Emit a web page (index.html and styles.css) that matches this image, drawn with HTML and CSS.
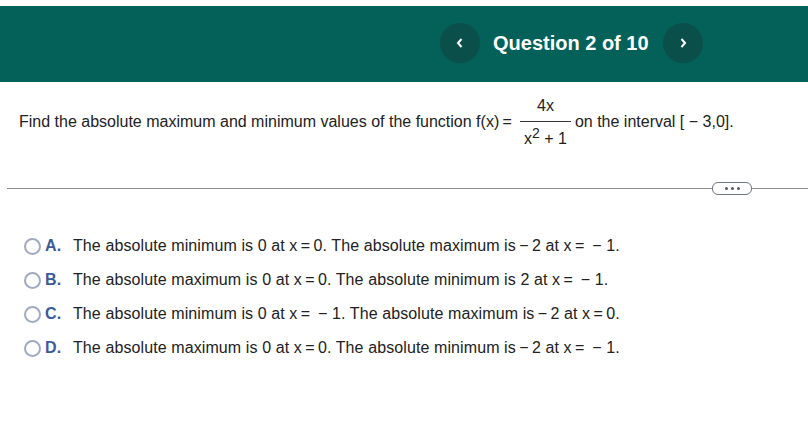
FILE: index.html
```html
<!DOCTYPE html>
<html>
<head>
<meta charset="utf-8">
<link rel="stylesheet" href="styles.css">
</head>
<body>
<div class="topgap"></div>
<header class="header">
  <div class="nav">
    <button class="navbtn" aria-label="Previous">
      <svg width="10" height="12" viewBox="0 0 10 12"><path d="M6.5 2 L3 6 L6.5 10" fill="none" stroke="#ffffff" stroke-width="2"/></svg>
    </button>
    <span class="qtitle">Question 2 of 10</span>
    <button class="navbtn" aria-label="Next">
      <svg width="10" height="12" viewBox="0 0 10 12"><path d="M3.5 2 L7 6 L3.5 10" fill="none" stroke="#ffffff" stroke-width="2"/></svg>
    </button>
  </div>
</header>
<main class="content">
  <div class="question">
    <span>Find the absolute maximum and minimum values of the function f(x)&#8201;=&#8201;</span>
    <span class="frac">
      <span class="num">4x</span>
      <span class="den">x<sup>2</sup> + 1</span>
    </span>
    <span>on the interval [ − 3,0].</span>
  </div>
  <div class="divider">
    <span class="line"></span>
    <span class="pill"><i></i><i></i><i></i></span>
    <span class="line tail"></span>
  </div>
  <ul class="options">
    <li><span class="radio"></span><span class="letter">A.</span><span class="otext">The absolute minimum is 0 at x&#8201;=&#8201;0. The absolute maximum is&#8201;−&#8201;2 at x&#8201;=&#8201; − 1.</span></li>
    <li><span class="radio"></span><span class="letter">B.</span><span class="otext">The absolute maximum is 0 at x&#8201;=&#8201;0. The absolute minimum is 2 at x&#8201;=&#8201; − 1.</span></li>
    <li><span class="radio"></span><span class="letter">C.</span><span class="otext">The absolute minimum is 0 at x&#8201;=&#8201; − 1. The absolute maximum is&#8201;−&#8201;2 at x&#8201;=&#8201;0.</span></li>
    <li><span class="radio"></span><span class="letter">D.</span><span class="otext">The absolute maximum is 0 at x&#8201;=&#8201;0. The absolute minimum is&#8201;−&#8201;2 at x&#8201;=&#8201; − 1.</span></li>
  </ul>
</main>
</body>
</html>
```
FILE: styles.css
```css
html, body {
  margin: 0;
  padding: 0;
  background: #ffffff;
  font-family: "Liberation Sans", Arial, sans-serif;
  color: #222222;
}
.topgap {
  height: 6px;
}
.header {
  height: 76px;
  background: #03615a;
  display: flex;
  align-items: center;
}
.nav {
  margin-left: 440px;
  margin-top: -2px;
  display: flex;
  align-items: center;
  gap: 13px;
}
.navbtn {
  width: 40px;
  height: 40px;
  border-radius: 50%;
  border: none;
  background: #0b4f4b;
  display: flex;
  align-items: center;
  justify-content: center;
  padding: 0;
}
.qtitle {
  color: #ffffff;
  font-weight: bold;
  font-size: 20px;
  width: 157px;
}
.content {
  padding: 0 0 0 19px;
}
.question {
  display: flex;
  align-items: center;
  font-size: 16px;
  margin-top: 12px;
  height: 56px;
}
.frac {
  display: inline-flex;
  flex-direction: column;
  align-items: center;
  margin: 0 6px 0 7px;
  line-height: 18px;
}
.num {
  padding: 0 2px 6px;
  border-bottom: 1px solid #333333;
  width: 100%;
  text-align: center;
}
.den {
  padding: 8px 2px 0;
}
.den sup {
  font-size: 14px;
  line-height: 0;
  vertical-align: 6px;
}
.divider {
  display: flex;
  align-items: center;
  margin-top: 32px;
  margin-left: -12px;
}
.line {
  height: 1px;
  background: #8c8c8c;
  width: 705px;
}
.line.tail {
  flex: 1;
  width: auto;
}
.pill {
  width: 38px;
  height: 11px;
  border: 1px solid #6e7680;
  border-radius: 6px;
  display: flex;
  align-items: center;
  justify-content: center;
  gap: 3px;
}
.pill i {
  width: 3px;
  height: 3px;
  background: #555c66;
  border-radius: 50%;
}
.options {
  list-style: none;
  margin: 34px 0 0;
  padding: 0 0 0 5px;
}
.options li {
  display: flex;
  align-items: center;
  height: 34px;
  font-size: 16px;
  letter-spacing: 0.1px;
}
.radio {
  width: 13px;
  height: 13px;
  border: 2px solid #a0aac0;
  border-radius: 50%;
  margin-right: 4px;
}
.letter {
  color: #3d5a98;
  font-weight: bold;
  width: 28px;
}
.otext {
  color: #222222;
}
```
